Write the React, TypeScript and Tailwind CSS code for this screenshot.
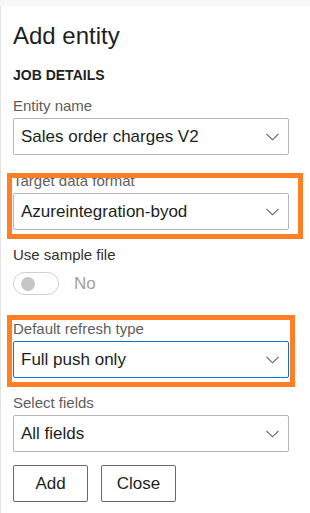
import React from 'react';

const Chevron = () => (
    <svg width="13" height="8" viewBox="0 0 13 8" fill="none">
        <polyline points="0.5,0.8 6.5,6.8 12.5,0.8" stroke="#605e5c" strokeWidth="1.1" />
    </svg>
);

type DropdownProps = {
    value: string;
    focused?: boolean;
};

// Fluent-style dropdown box
const Dropdown = ({ value, focused }: DropdownProps) => (
    <div
        className={
            focused
                ? 'mt-[2px] flex h-[37px] items-center justify-between rounded-[2px] border border-[#0078d4] pl-[7px] pr-[9px]'
                : 'mt-[2px] flex h-[37px] items-center justify-between rounded-[2px] border border-[#b8b6b4] pl-[7px] pr-[9px]'
        }
    >
        <span className="text-[17px] leading-[22px] text-[#201f1e]">{value}</span>
        <Chevron />
    </div>
);

const Label = ({ children, dark }: { children: React.ReactNode; dark?: boolean }) => (
    <div className={dark ? 'text-[15px] leading-[20px] text-[#323130]' : 'text-[15px] leading-[20px] text-[#605e5c]'}>
        {children}
    </div>
);

const App = () => {
    return (
        <div className="relative min-h-[513px] w-[310px] overflow-hidden bg-white font-['Liberation_Sans',Arial,sans-serif]">
            <div className="h-[6px] bg-[#f7f7f7]" />
            <div className="min-h-[507px] border-l border-[#e3e3e3] pl-[12px] pr-[21px] pt-[14px]">
                <h1 className="text-[24px] leading-[32px] text-[#201f1e]">Add entity</h1>
                <h2 className="mt-[13px] text-[14px] font-bold leading-[20px] text-[#201f1e]">JOB DETAILS</h2>

                <div className="mt-[11px]">
                    <Label>Entity name</Label>
                    <Dropdown value="Sales order charges V2" />
                </div>

                <div className="mt-[16px]">
                    <Label>Target data format</Label>
                    <Dropdown value="Azureintegration-byod" />
                </div>

                <div className="mt-[15px]">
                    <Label dark>Use sample file</Label>
                    <div className="mt-[7px] flex items-center">
                        <div className="flex h-[23px] w-[46px] items-center rounded-full border border-[#d2d0ce] pl-[7px]">
                            <div className="h-[14px] w-[14px] rounded-full bg-[#c8c6c4]" />
                        </div>
                        <span className="ml-[15px] text-[17px] leading-[22px] text-[#a19f9d]">No</span>
                    </div>
                </div>

                <div className="mt-[24px]">
                    <Label>Default refresh type</Label>
                    <Dropdown value="Full push only" focused />
                </div>

                <div className="mt-[15px]">
                    <Label>Select fields</Label>
                    <Dropdown value="All fields" />
                </div>

                <div className="mt-[13px] flex gap-[13px]">
                    <button className="h-[37px] w-[75px] rounded-[2px] border border-[#6b6a69] text-[17px] text-[#201f1e]">
                        Add
                    </button>
                    <button className="h-[37px] w-[75px] rounded-[2px] border border-[#6b6a69] text-[17px] text-[#201f1e]">
                        Close
                    </button>
                </div>
            </div>

            {/* annotation rectangles drawn over the form */}
            <div className="pointer-events-none absolute left-[7px] top-[173px] h-[66px] w-[296px] border-[5px] border-[#ff7f27]" />
            <div className="pointer-events-none absolute left-[7px] top-[315px] h-[72px] w-[288px] border-[5px] border-[#ff7f27]" />
        </div>
    );
};

export default App;
